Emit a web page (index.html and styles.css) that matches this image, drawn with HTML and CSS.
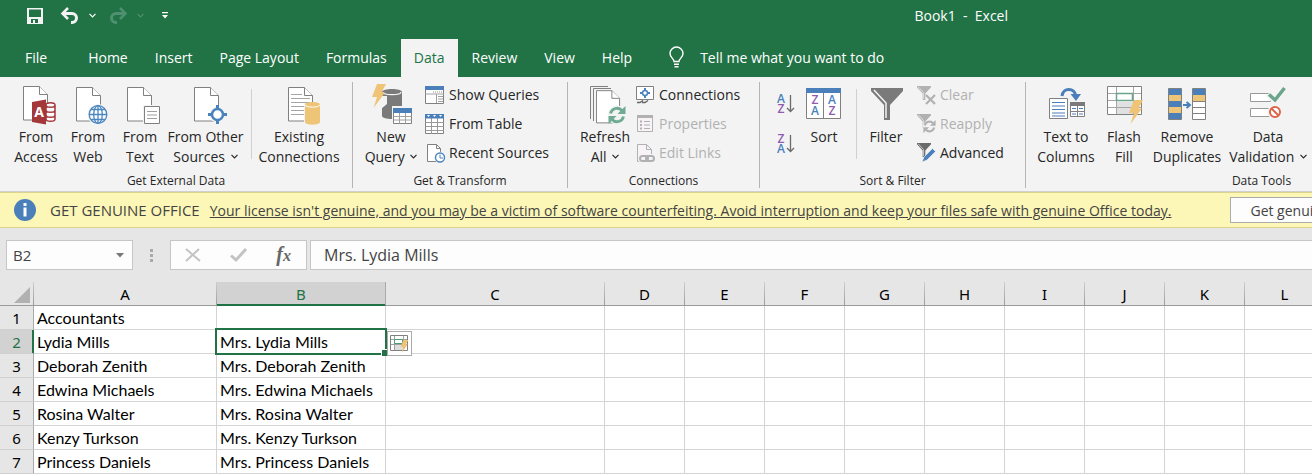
FILE: index.html
```html
<!DOCTYPE html>
<html lang="en">
<head>
    <meta charset="UTF-8">
    <meta name="viewport" content="width=device-width, initial-scale=1.0">
    <title>Book1 - Excel</title>
    <link rel="stylesheet" href="styles.css">
</head>
<body>
    <!-- shared shapes -->
    <svg class="defs" aria-hidden="true">
        <defs>
            <symbol id="doc" viewBox="0 0 26 35">
                <path d="M.5.5h16l8 8V34H.5z" fill="#fff" stroke="#808080"/>
                <path d="M16.5.5v8h8" fill="#fff" stroke="#808080"/>
            </symbol>
            <symbol id="chevron" viewBox="0 0 7 5">
                <path d="M.5.8l3 3 3-3" fill="none" stroke="currentColor" stroke-width="1.2"/>
            </symbol>
            <symbol id="bolt" viewBox="0 0 14 24">
                <path d="M5 0h9L9.500 8.500H13L1.500 24 5 13H0z" fill="#efc477"/>
            </symbol>
            <symbol id="refresh" viewBox="0 0 18 18">
                <path d="M2.500 7.500A6.700 6.700 0 0 1 14 4.500M15.500 10.500A6.700 6.700 0 0 1 4 13.500" fill="none" stroke="currentColor" stroke-width="2.800"/>
                <path d="M17.500 0v8h-8zM.5 18v-8h8z" fill="currentColor"/>
            </symbol>
            <symbol id="funnel" viewBox="0 0 32 32">
                <path d="M0 0h32v3L19 17v15h-6V17L0 3z" fill="currentColor"/>
                <path d="M3 2l12 13v15" fill="none" stroke="#f3f3f3" stroke-width="1.500"/>
            </symbol>
        </defs>
    </svg>

    <header class="app-header">
        <div class="title-bar">
            <div class="quick-access">
                <button class="qa-button" aria-label="Save">
                    <svg width="16" height="16" viewBox="0 0 16 16"><path d="M0 0h16v16H0zM2 1.500V9h12V1.500zM4 11v4h2v-3h2v3h3v-4z" fill="#f3f3f3" fill-rule="evenodd"/></svg>
                </button>
                <button class="qa-button undo" aria-label="Undo">
                    <svg width="18" height="16" viewBox="0 0 18 16"><path d="M2 5.500h9a4.500 4.500 0 0 1 0 9H10" fill="none" stroke="#f3f3f3" stroke-width="3"/><path d="M7 0L1.500 5.500 7 11" fill="none" stroke="#f3f3f3" stroke-width="2.500"/></svg>
                </button>
                <button class="qa-button arrow" aria-label="Undo list"><svg width="7" height="5"><use href="#chevron"/></svg></button>
                <button class="qa-button redo" aria-label="Redo" disabled>
                    <svg width="18" height="16" viewBox="0 0 18 16"><path d="M16 5.500H7a4.500 4.500 0 0 0 0 9H8" fill="none" stroke="#4f9070" stroke-width="3"/><path d="M11 0l5.500 5.500L11 11" fill="none" stroke="#4f9070" stroke-width="2.500"/></svg>
                </button>
                <button class="qa-button arrow muted" aria-label="Redo list" disabled><svg width="7" height="5"><use href="#chevron"/></svg></button>
                <button class="qa-button customize" aria-label="Customize Quick Access Toolbar">
                    <svg width="7" height="7" viewBox="0 0 7 7"><path d="M0 0h6v1.200H0zM0 3h6L3 6.500z" fill="#fff"/></svg>
                </button>
            </div>
            <div class="window-title">Book1&nbsp; -&nbsp; Excel</div>
        </div>
        <nav class="tabs">
            <button class="tab file">File</button>
            <button class="tab">Home</button>
            <button class="tab">Insert</button>
            <button class="tab">Page Layout</button>
            <button class="tab">Formulas</button>
            <button class="tab active">Data</button>
            <button class="tab">Review</button>
            <button class="tab">View</button>
            <button class="tab">Help</button>
            <button class="tab tell-me">
                <svg width="15" height="21" viewBox="0 0 15 21"><path d="M5 14.500c0-3-4-4-4-8a6.500 6.500 0 0 1 13 0c0 4-4 5-4 8zM5 17.200h5M5.500 19.700h4" fill="none" stroke="#fff" stroke-width="1.400"/></svg>
                Tell me what you want to do
            </button>
        </nav>
    </header>

    <section class="ribbon">
        <div class="group external">
            <div class="group-items">
                <button class="big">
                    <svg class="icon" viewBox="0 0 44 42">
                        <use href="#doc" x="9" y="2" width="26" height="35"/>
                        <path d="M31 19h11v20H31z" fill="#f3f3f3"/>
                        <path d="M32 21c0-3 9-3 9 0v14c0 3-9 3-9 0zM32 21c0 3 9 3 9 0M32 26c0 3 9 3 9 0M32 31c0 3 9 3 9 0" fill="#fff" stroke="#a4373a" stroke-width="1.500"/>
                        <path d="M18 18l14-2.500v25L18 38z" fill="#a4373a"/>
                        <text x="25" y="32.500" class="icon-text access">A</text>
                    </svg>
                    <span>From<br>Access</span>
                </button>
                <button class="big">
                    <svg class="icon" viewBox="0 0 44 42">
                        <use href="#doc" x="10" y="3" width="26" height="35"/>
                        <circle cx="32" cy="30.500" r="10.500" fill="#f3f3f3"/>
                        <g fill="none" stroke="#4a86c0" stroke-width="1.300"><circle cx="32" cy="30.500" r="8.800" fill="#fff"/><ellipse cx="32" cy="30.500" rx="4.300" ry="8.800"/><path d="M32 21.500v18M23 30.500h18M25 25.500h14M25 35.500h14"/></g>
                    </svg>
                    <span>From<br>Web</span>
                </button>
                <button class="big">
                    <svg class="icon" viewBox="0 0 44 42">
                        <use href="#doc" x="9" y="3" width="26" height="35"/>
                        <path d="M25 21h18v20H25z" fill="#f3f3f3"/>
                        <path d="M26.500 22.500h15v17h-15z" fill="#fff" stroke="#808080"/>
                        <path d="M29 27.500h10M29 31h10M29 34.500h10" stroke="#a0a0a0"/>
                    </svg>
                    <span>From<br>Text</span>
                </button>
                <button class="big wide">
                    <svg class="icon" viewBox="0 0 44 42">
                        <use href="#doc" x="10" y="3" width="26" height="35"/>
                        <circle cx="33.500" cy="30.500" r="8" fill="#f3f3f3"/>
                        <circle cx="33.500" cy="30.500" r="5.500" fill="#fff" stroke="#4a82bd" stroke-width="2.500"/>
                        <path d="M33.500 21v4M33.500 36v4M24 30.500h4M39 30.500h4" stroke="#4a82bd" stroke-width="3"/>
                    </svg>
                    <span>From Other<br>Sources <svg class="chevron"><use href="#chevron"/></svg></span>
                </button>
                <div class="divider"></div>
                <button class="big wider">
                    <svg class="icon" viewBox="0 0 44 42">
                        <use href="#doc" x="11" y="3" width="26" height="35"/>
                        <path d="M14 10.500h11M14 14.500h19M14 18.500h19M14 22.500h15M14 26.500h13M14 30.500h13" stroke="#a6a6a6"/>
                        <path d="M27 19h17v22H27z" fill="#f3f3f3"/>
                        <path d="M28 20.500c0-3.500 15-3.500 15 0V38c0 3.500-15 3.500-15 0z" fill="#eec577"/>
                        <path d="M28 20.500c0 3.500 15 3.500 15 0" fill="none" stroke="#fff"/>
                    </svg>
                    <span>Existing<br>Connections</span>
                </button>
            </div>
            <div class="group-label">Get External Data</div>
        </div>

        <div class="group transform">
            <div class="group-items">
                <button class="big query">
                    <svg class="icon" viewBox="0 0 44 42">
                        <path d="M13 8c0-4 20-4 20 0v24c0 4-20 4-20 0z" fill="#7a7a7a"/>
                        <path d="M14 8c0 3.500 18 3.500 18 0" fill="none" stroke="#f3f3f3" stroke-width="1.200"/>
                        <path d="M11 12h7v8l-6 5z" fill="#f3f3f3"/>
                        <use href="#bolt" x="3" y="0" width="14" height="24"/>
                        <path d="M23 22h21v19H23z" fill="#f3f3f3"/>
                        <path d="M24.500 24.500h18v15h-18z" fill="#fff" stroke="#808080"/>
                        <path d="M24.500 32.500h18M24.500 36h18M30.500 29v10.500M36.500 29v10.500" stroke="#a0a0a0"/>
                        <path d="M24 24h19v5H24z" fill="#4a7fb9"/>
                    </svg>
                    <span>New<br>Query <svg class="chevron"><use href="#chevron"/></svg></span>
                </button>
                <div class="stack">
                    <button class="small">
                        <svg width="20" height="20" viewBox="0 0 20 20"><path d="M.5 1.500h18v17H.5z" fill="#fff" stroke="#808080"/><path d="M0 1h19v4H0z" fill="#4a7fb9"/><path d="M8 7h9" stroke="#999" stroke-dasharray="1 1"/><path d="M0 9h19M11.500 9v9M13 11.500h5M13 14h5M13 16.500h5" stroke="#a0a0a0"/></svg>
                        Show Queries
                    </button>
                    <button class="small">
                        <svg width="20" height="20" viewBox="0 0 20 20"><path d="M.5.5h18v19H.5z" fill="#fff" stroke="#808080"/><path d="M0 8.500h19M0 12.500h19M0 16.500h19M6.500 4v16M12.500 4v16" stroke="#999"/><path d="M0 0h19v4.500H0z" fill="#4a7fb9"/><path d="M2 1h3L3.500 3zM8 1h3L9.500 3zM14 1h3l-1.500 2z" fill="#fff"/></svg>
                        From Table
                    </button>
                    <button class="small">
                        <svg width="20" height="20" viewBox="0 0 20 20"><path d="M2.500 1.500h9l4 4v13h-13z" fill="#fff" stroke="#808080"/><path d="M11.500 1.500v4h4" fill="none" stroke="#808080"/><circle cx="15" cy="14.500" r="5.800" fill="#f3f3f3"/><circle cx="15" cy="14.500" r="4.500" fill="#fff" stroke="#4a86c0" stroke-width="1.400"/><path d="M15 11.500v3.500h3" fill="none" stroke="#4a86c0"/></svg>
                        Recent Sources
                    </button>
                </div>
            </div>
            <div class="group-label">Get &amp; Transform</div>
        </div>

        <div class="group connections">
            <div class="group-items">
                <button class="big">
                    <svg class="icon" viewBox="0 0 44 42">
                        <path d="M25 2.500H7.500V35M28 4.500H10.500V37" fill="none" stroke="#808080"/>
                        <use href="#doc" x="13" y="6" width="25" height="34"/>
                        <circle cx="34" cy="31" r="9.500" fill="#f3f3f3"/>
                        <use href="#refresh" x="25" y="22" width="18" height="18" color="#6faa92"/>
                    </svg>
                    <span>Refresh<br>All <svg class="chevron"><use href="#chevron"/></svg></span>
                </button>
                <div class="stack">
                    <button class="small">
                        <svg width="19" height="20" viewBox="0 0 19 20"><path d="M.5 1.500h17v13H.5z" fill="#fff" stroke="#808080"/><path d="M1 17.500h3l3-2M6 17.500h3l3-2" fill="none" stroke="#666" stroke-width="1.500"/><circle cx="9" cy="8" r="2.500" fill="none" stroke="#4a82bd" stroke-width="1.500"/><path d="M9 3v2.500M9 10.500V13M4 8h2.500M11.500 8H14" stroke="#4a82bd" stroke-width="2"/></svg>
                        Connections
                    </button>
                    <button class="small" disabled>
                        <svg width="19" height="20" viewBox="0 0 19 20"><path d="M1.500 1.500h15v16h-15z" fill="#f7f3f7" stroke="#b1b1b1"/><path d="M1 1h16v3H1z" fill="#b1b1b1"/><path d="M8 7.500h6M8 11h6M8 14.500h6" stroke="#b1b1b1"/><path d="M4 6.500h2v2H4zM4 10h2v2H4zM4 13.500h2v2H4z" fill="#b1b1b1"/></svg>
                        Properties
                    </button>
                    <button class="small" disabled>
                        <svg width="19" height="20" viewBox="0 0 19 20"><path d="M3 18.500H1.500v-17h9l5 5V11M10.500 1.500v5h5" fill="#f7f3f7" stroke="#b1b1b1"/><g fill="none" stroke="#b1b1b1" stroke-width="2"><rect x="4" y="13" width="8" height="5" rx="2.500"/><rect x="10" y="13" width="8" height="5" rx="2.500"/></g></svg>
                        Edit Links
                    </button>
                </div>
            </div>
            <div class="group-label">Connections</div>
        </div>

        <div class="group sort-filter">
            <div class="group-items">
                <div class="sort-buttons">
                    <button class="sort-button" aria-label="Sort A to Z">
                        <svg width="18" height="20" viewBox="0 0 18 20"><text x="4" y="9" class="icon-text blue">A</text><text x="4" y="19" class="icon-text purple">Z</text><path d="M13.500 1v16M10 14l3.500 3.500L17 14" fill="none" stroke="#6b6b6b" stroke-width="1.300"/></svg>
                    </button>
                    <button class="sort-button" aria-label="Sort Z to A">
                        <svg width="18" height="20" viewBox="0 0 18 20"><text x="4" y="9" class="icon-text purple">Z</text><text x="4" y="19" class="icon-text blue">A</text><path d="M13.500 1v16M10 14l3.500 3.500L17 14" fill="none" stroke="#6b6b6b" stroke-width="1.300"/></svg>
                    </button>
                </div>
                <button class="big">
                    <svg class="icon" viewBox="0 0 44 42">
                        <path d="M4.500 4.500h34v30h-34zM21.500 8v26" fill="#fff" stroke="#808080"/>
                        <path d="M4 4h35v5H4z" fill="#4a7fb9"/>
                        <text x="13" y="20" class="icon-text purple">Z</text><text x="13" y="31" class="icon-text blue">A</text>
                        <text x="30" y="20" class="icon-text blue">A</text><text x="30" y="31" class="icon-text purple">Z</text>
                    </svg>
                    <span>Sort</span>
                </button>
                <div class="divider"></div>
                <button class="big">
                    <svg class="icon" viewBox="0 0 44 42"><use href="#funnel" x="7" y="4" width="32" height="32" color="#7a7a7a"/></svg>
                    <span>Filter</span>
                </button>
                <div class="stack">
                    <button class="small" disabled>
                        <svg width="19" height="20" viewBox="0 0 19 20"><use href="#funnel" x="0" y="1" width="14" height="14" color="#b1b1b1"/><path d="M9 10l9 9M18 10l-9 9" stroke="#b1b1b1" stroke-width="2.200"/></svg>
                        Clear
                    </button>
                    <button class="small" disabled>
                        <svg width="19" height="20" viewBox="0 0 19 20"><use href="#funnel" x="0" y="0" width="14" height="14" color="#b1b1b1"/><circle cx="12.500" cy="13" r="6.500" fill="#f3f3f3"/><use href="#refresh" x="6" y="6" width="13" height="13" color="#b1b1b1"/></svg>
                        Reapply
                    </button>
                    <button class="small">
                        <svg width="19" height="20" viewBox="0 0 19 20"><use href="#funnel" x="0" y="0" width="14" height="14" color="#6b6b6b"/><path d="M5 19l2-5 8.500-8.500 3 3L10 17z" fill="#4a82bd" stroke="#f3f3f3" stroke-width=".6"/></svg>
                        Advanced
                    </button>
                </div>
            </div>
            <div class="group-label">Sort &amp; Filter</div>
        </div>

        <div class="group tools">
            <div class="group-items">
                <button class="big columns">
                    <svg class="icon" viewBox="0 0 44 42">
                        <path d="M5.500 14.500h18v20h-18z" fill="#fff" stroke="#808080"/>
                        <path d="M8 18.500h13M8 22h13M8 25.500h13M8 29h13M8 32h13" stroke="#4a7fb9" stroke-width="1.200"/>
                        <path d="M26.500 18.500h14v14h-14zM33.500 22v10M27 27.500h14" fill="#fff" stroke="#808080"/>
                        <path d="M26 18h15v4H26z" fill="#7a7a7a"/>
                        <path d="M28 24.500h4M35 24.500h4M28 30h4M35 30h4" stroke="#4a7fb9"/>
                        <path d="M18 12C19 3.500 30 3 32 12" fill="none" stroke="#4a7fb9" stroke-width="3"/>
                        <path d="M26.500 10h10.500L32 17z" fill="#4a7fb9"/>
                    </svg>
                    <span>Text to<br>Columns</span>
                </button>
                <button class="big">
                    <svg class="icon" viewBox="0 0 44 42">
                        <path d="M5.500 2.500h34v28h-34z" fill="#fff"/>
                        <path d="M14 18h17v12H14z" fill="#e0e0e0"/>
                        <path d="M14.500 3v27M31.500 3v27M6 9.500h33M6 16.500h33M6 23.500h33" stroke="#a6a6a6"/>
                        <path d="M5.500 2.500h34v28h-34z" fill="none" stroke="#808080"/>
                        <path d="M14.500 9.500h16v7h-16z" fill="#fff" stroke="#6aa58c" stroke-width="1.500"/>
                        <use href="#bolt" x="27" y="16" width="14" height="24"/>
                    </svg>
                    <span>Flash<br>Fill</span>
                </button>
                <button class="big duplicates">
                    <svg class="icon" viewBox="0 0 44 42">
                        <path d="M3.500 4.500h13v31h-13z" fill="#4a7fb9"/><path d="M4 11h12v6H4zM4 23h12v6H4z" fill="#eec577"/>
                        <path d="M3.500 4.500h13v31h-13z" fill="none" stroke="#808080"/>
                        <path d="M27.500 4.500h13v31h-13z" fill="#fff"/><path d="M28 5h12v6H28z" fill="#4a7fb9"/><path d="M28 11h12v6H28z" fill="#eec577"/>
                        <path d="M27.500 4.500h13v31h-13zM28 17.500h12M28 23.500h12M28 29.500h12" fill="none" stroke="#808080"/>
                        <path d="M18 21h6M21.500 18l3.500 3-3.500 3" fill="none" stroke="#4a7fb9" stroke-width="2"/>
                    </svg>
                    <span>Remove<br>Duplicates</span>
                </button>
                <button class="big wider">
                    <svg class="icon" viewBox="0 0 44 42">
                        <path d="M4.500 9.500h20v8h-20zM4.500 24.500h20v8h-20z" fill="#fff" stroke="#999"/>
                        <path d="M22 10l7 7L40 3" fill="none" stroke="#f3f3f3" stroke-width="6"/>
                        <path d="M23 10.500l6 5.500L38.500 4" fill="none" stroke="#6aa58c" stroke-width="3.500"/>
                        <circle cx="29" cy="28" r="7.500" fill="#f3f3f3"/>
                        <circle cx="29" cy="28" r="5" fill="#fff" stroke="#dc6549" stroke-width="2"/><path d="M25.500 24.500l7 7" stroke="#dc6549" stroke-width="2"/>
                    </svg>
                    <span>Data<br>Validation <svg class="chevron"><use href="#chevron"/></svg></span>
                </button>
            </div>
            <div class="group-label">Data Tools</div>
        </div>
    </section>

    <div class="notice">
        <svg class="info" width="22" height="22" viewBox="0 0 22 22"><circle cx="11" cy="11" r="11" fill="#4a7fb9"/><path d="M9.500 4h3v3h-3zM9.500 8.500h3v9h-3z" fill="#fff"/></svg>
        <span class="notice-title">GET GENUINE OFFICE</span>
        <a href="#">Your license isn't genuine, and you may be a victim of software counterfeiting. Avoid interruption and keep your files safe with genuine Office today.</a>
        <button class="notice-button">Get genuine Office</button>
    </div>

    <div class="formula-bar">
        <div class="name-box">
            <input type="text" value="B2" aria-label="Name Box">
            <button aria-label="Name list"><svg width="8" height="5" viewBox="0 0 8 5"><path d="M0 0h8L4 4.500z" fill="#777"/></svg></button>
        </div>
        <svg class="grip" width="3" height="13" viewBox="0 0 3 13"><path d="M0 0h3v3H0zM0 5h3v3H0zM0 10h3v3H0z" fill="#aaa"/></svg>
        <div class="formula-actions">
            <button aria-label="Cancel"><svg width="16" height="14" viewBox="0 0 16 14"><path d="M1 1l14 12M14 1L1 13" stroke="#c3c3c3" stroke-width="2"/></svg></button>
            <button aria-label="Enter"><svg width="17" height="14" viewBox="0 0 17 14"><path d="M1 7.500l5 4.500L16 1" fill="none" stroke="#c3c3c3" stroke-width="3"/></svg></button>
            <button class="fx" aria-label="Insert Function">f<span>x</span></button>
        </div>
        <input class="formula-input" type="text" value="Mrs. Lydia Mills" aria-label="Formula Bar">
    </div>

    <main class="sheet">
        <table>
            <colgroup>
                <col class="col-head"><col class="col-a"><col class="col-b"><col class="col-c">
                <col span="9" class="col-std">
            </colgroup>
            <thead>
                <tr>
                    <th class="corner"><svg width="16" height="16" viewBox="0 0 16 16"><path d="M16 0v16H0z" fill="#b1b1b1"/></svg></th>
                    <th>A</th><th class="selected">B</th><th>C</th><th>D</th><th>E</th><th>F</th><th>G</th><th>H</th><th>I</th><th>J</th><th>K</th><th>L</th>
                </tr>
            </thead>
            <tbody>
                <tr><th>1</th><td>Accountants</td><td></td><td></td><td></td><td></td><td></td><td></td><td></td><td></td><td></td><td></td><td></td></tr>
                <tr>
                    <th class="selected">2</th><td>Lydia Mills</td>
                    <td class="active-cell">Mrs. Lydia Mills
                        <button class="fill-options" aria-label="Flash Fill Options">
                            <svg width="20" height="20" viewBox="0 0 20 20"><path d="M1.500 1.500h17v15h-17z" fill="#fff" stroke="#808080"/><path d="M6 11h8v5H6z" fill="#ddd"/><path d="M5.500 2v14M14.500 2v14M2 5.500h16M2 10.500h16" stroke="#a0a0a0"/><path d="M5.500 5.500h8v4h-8z" fill="#fff" stroke="#4f9a78"/><use href="#bolt" x="11" y="6" width="9" height="13"/></svg>
                        </button>
                    </td>
                    <td></td><td></td><td></td><td></td><td></td><td></td><td></td><td></td><td></td><td></td>
                </tr>
                <tr><th>3</th><td>Deborah Zenith</td><td>Mrs. Deborah Zenith</td><td></td><td></td><td></td><td></td><td></td><td></td><td></td><td></td><td></td><td></td></tr>
                <tr><th>4</th><td>Edwina Michaels</td><td>Mrs. Edwina Michaels</td><td></td><td></td><td></td><td></td><td></td><td></td><td></td><td></td><td></td><td></td></tr>
                <tr><th>5</th><td>Rosina Walter</td><td>Mrs. Rosina Walter</td><td></td><td></td><td></td><td></td><td></td><td></td><td></td><td></td><td></td><td></td></tr>
                <tr><th>6</th><td>Kenzy Turkson</td><td>Mrs. Kenzy Turkson</td><td></td><td></td><td></td><td></td><td></td><td></td><td></td><td></td><td></td><td></td></tr>
                <tr><th>7</th><td>Princess Daniels</td><td>Mrs. Princess Daniels</td><td></td><td></td><td></td><td></td><td></td><td></td><td></td><td></td><td></td><td></td></tr>
            </tbody>
        </table>
    </main>
</body>
</html>
```
FILE: styles.css
```css
* {
    box-sizing: border-box;
}

body {
    margin: 0;
    font-family: 'Open Sans', 'Noto Sans', sans-serif;
    font-size: 14px;
    color: #262626;
    background-color: #e6e6e6;
    overflow: hidden;
}

button {
    font: inherit;
    color: inherit;
    background: none;
    border: none;
    padding: 0;
    white-space: nowrap;
}

input {
    font: inherit;
    color: inherit;
    border: none;
    outline: none;
    background: none;
    min-width: 0;
}

svg {
    display: block;
    flex: none;
    overflow: visible;
}

.defs {
    position: absolute;
    width: 0;
    height: 0;
}

/* Title bar and tabs */
.app-header {
    background-color: #217346;
    color: #fff;
}

.title-bar {
    display: flex;
    align-items: center;
    justify-content: space-between;
    height: 39px;
    padding: 0 304px 8px 27px;
}

.quick-access {
    display: flex;
    align-items: center;
}

.undo {
    margin-left: 18px;
}

.arrow {
    margin-left: 10px;
}

.redo {
    margin-left: 13px;
}

.muted {
    color: #4f9070;
}

.customize {
    margin-left: 18px;
}

.tabs {
    display: flex;
    gap: 1px;
    height: 38px;
    padding-left: 12px;
}

.tab {
    padding: 0 13px 2px;
}

.tab.file {
    margin-right: 14px;
}

.tab.active {
    background-color: #f3f3f3;
    color: #217346;
}

.tell-me {
    display: flex;
    align-items: center;
    gap: 16px;
    margin-left: 10px;
}

/* Ribbon */
.ribbon {
    display: flex;
    background-color: #f3f3f3;
    border-bottom: 1px solid #d0d0d0;
    padding: 5px 0 3px;
    overflow: hidden;
}

.group {
    flex: none;
    border-right: 1px solid #b5b5b5;
}

.group-items {
    display: flex;
    height: 91px;
    padding-top: 2px;
}

.group-label {
    font-size: 12px;
    line-height: 15px;
    text-align: center;
}

.external {
    width: 353px;
}

.external .group-items {
    padding-left: 10px;
}

.transform {
    width: 215px;
}

.transform .group-items {
    padding-left: 9px;
}

.connections {
    width: 192px;
}

.connections .group-items {
    padding-left: 11px;
}

.sort-filter {
    width: 266px;
}

.sort-filter .group-items {
    padding-left: 17px;
}

.tools {
    width: 472px;
}

.tools .group-items {
    padding-left: 8px;
}

.big {
    display: flex;
    flex-direction: column;
    align-items: center;
    width: 52px;
    line-height: 20px;
}

.big.wide {
    width: 79px;
}

.big.wider {
    width: 88px;
}

.big.query {
    width: 58px;
}

.big.columns {
    width: 64px;
}

.big.duplicates {
    width: 74px;
}

.icon {
    width: 44px;
    height: 42px;
    margin-bottom: 1px;
}

.chevron {
    display: inline-block;
    width: 7px;
    height: 5px;
    margin: 0 0 3px 2px;
}

.divider {
    width: 1px;
    height: 70px;
    margin: 5px 3px 0 6px;
    background-color: #d0d0d0;
}

.stack {
    display: flex;
    flex-direction: column;
    margin-left: 5px;
}

.small {
    display: flex;
    align-items: center;
    gap: 4px;
    height: 29px;
    padding-bottom: 8px;
}

.small:disabled {
    color: #b1b1b1;
}

.sort-buttons {
    display: flex;
    flex-direction: column;
    gap: 20px;
    padding-top: 10px;
    margin-right: 3px;
}

.icon-text {
    font-family: 'Open Sans', sans-serif;
    font-size: 12px;
    font-weight: 600;
    text-anchor: middle;
}

.access {
    font-size: 14px;
    font-weight: 700;
    fill: #fff;
}

.blue {
    fill: #4a82bd;
}

.purple {
    fill: #8e5bb0;
}

/* License notice */
.notice {
    display: flex;
    align-items: center;
    height: 36px;
    padding-left: 14px;
    background-color: #fcf7b6;
    border-top: 1px solid #d9d48a;
    border-bottom: 1px solid #d9d48a;
    color: #444;
    white-space: nowrap;
    overflow: hidden;
}

.notice-title {
    margin: 0 10px 0 14px;
    font-size: 15px;
}

.notice a {
    color: #444;
}

.notice-button {
    flex: none;
    height: 26px;
    margin-left: 59px;
    padding: 0 19px;
    background-color: #fdfdfd;
    border: 1px solid #ababab;
}

/* Formula bar */
.formula-bar {
    display: flex;
    align-items: center;
    padding: 12px 0 12px 6px;
    font-size: 16px;
    color: #444;
}

.name-box,
.formula-actions,
.formula-input {
    height: 30px;
    background-color: #fdfdfd;
    border: 1px solid #c6c6c6;
}

.name-box {
    display: flex;
    align-items: center;
    width: 127px;
    padding: 0 8px 0 6px;
}

.name-box input {
    flex: 1;
    padding: 0;
    font-size: 15px;
}

.grip {
    margin: 0 17px;
}

.formula-actions {
    display: flex;
    align-items: center;
    justify-content: space-between;
    width: 137px;
    margin-right: 3px;
    padding: 0 15px 0 14px;
}

.fx {
    font-family: 'Liberation Serif', serif;
    font-size: 20px;
    font-style: italic;
    font-weight: bold;
    line-height: 20px;
    color: #666;
}

.fx span {
    font-size: 16px;
}

.formula-input {
    flex: 1;
    padding: 0 13px;
    border-right: none;
}

/* Grid */
.sheet {
    overflow: hidden;
    font-family: 'Noto Sans', sans-serif;
    font-size: 15px;
    color: #000;
}

table {
    table-layout: fixed;
    width: 1325px;
    border-collapse: separate;
    border-spacing: 0;
    background-color: #fff;
}

.col-head {
    width: 34px;
}

.col-a {
    width: 183px;
}

.col-b {
    width: 169px;
}

.col-c {
    width: 219px;
}

.col-std {
    width: 80px;
}

th {
    height: 24px;
    padding: 0;
    font-weight: normal;
    line-height: 20px;
    background-color: #e6e6e6;
    border-right: 1px solid #ababab;
    border-bottom: 1px solid #ababab;
}

thead th {
    border-bottom-color: #999;
    border-image: linear-gradient(#d0d0d0, #999) 1;
}

tbody th {
    border-bottom-color: #d0d0d0;
}

th.selected {
    background-color: #d2d2d2;
    color: #217346;
}

thead th.selected {
    border-image: none;
    border-bottom-color: #217346;
    box-shadow: inset 0 -1px #217346;
}

tbody th.selected {
    border-right-color: #217346;
    box-shadow: inset -1px 0 #217346;
}

.corner svg {
    margin: 3px 0 0 14px;
}

td {
    height: 24px;
    padding: 1px 3px 0;
    font-family: Lato, sans-serif;
    font-size: 16px;
    line-height: 20px;
    white-space: nowrap;
    border-right: 1px solid #d4d4d4;
    border-bottom: 1px solid #d4d4d4;
}

.active-cell {
    position: relative;
}

.active-cell::before {
    content: '';
    position: absolute;
    inset: -2px;
    border: 2px solid #217346;
}

.active-cell::after {
    content: '';
    position: absolute;
    right: -3px;
    bottom: -3px;
    width: 6px;
    height: 6px;
    background-color: #217346;
    border-top: 1px solid #fff;
    border-left: 1px solid #fff;
}

.fill-options {
    position: absolute;
    left: 100%;
    top: 1px;
    width: 25px;
    height: 25px;
    margin-left: 2px;
    padding: 1px;
    background-color: #fff;
    border: 1px solid #ababab;
    z-index: 1;
}
```
